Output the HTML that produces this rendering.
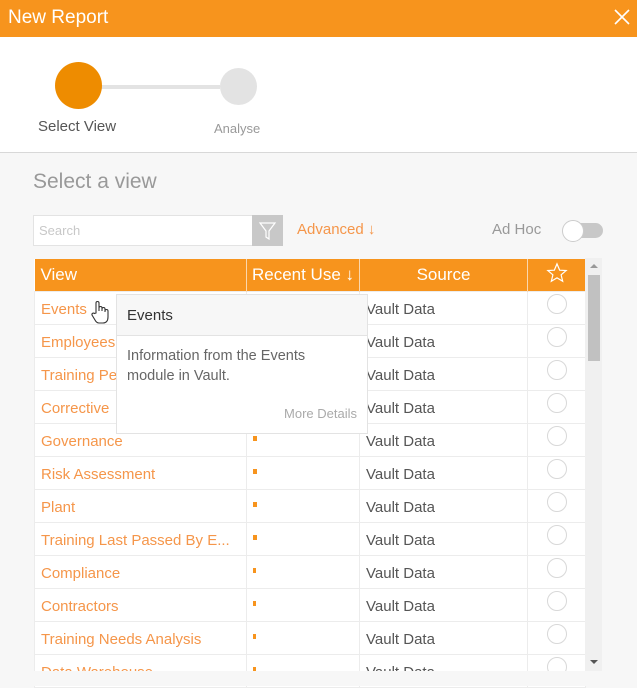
<!DOCTYPE html>
<html><head><style>
*{margin:0;padding:0;box-sizing:border-box}
body{width:637px;height:686px;overflow:hidden;background:#f7f7f7;font-family:"Liberation Sans",sans-serif;position:relative}
.hdr{position:absolute;left:0;top:0;width:637px;height:37px;background:#f7941d;color:#fff;font-size:19px;padding:7px 0 0 8px}
.x{position:absolute;right:6px;top:8px}
.step{position:absolute;left:0;top:37px;width:637px;height:116px;background:#fff;border-bottom:1px solid #d8d8d8}
.abs{position:absolute}
table{border-collapse:collapse;position:absolute;left:34px;top:259px;width:551px;background:#fff;table-layout:fixed}
th{background:#f7941d;color:#fff;font-weight:normal;font-size:17px;height:32px;border-right:1px solid #fbd7ad;text-align:center;padding-top:1px}
td{height:33px;border:1px solid #ececec;font-size:15px;padding:3px 0 0 6px;white-space:nowrap;overflow:hidden}
td.v{color:#f5964a}
td.s{color:#555}
.c{display:block;width:20px;height:20px;border:1px solid #d8d8d8;border-radius:50%;margin:0 auto;position:relative;top:-5px;left:-3px}
.b{display:inline-block;width:4px;background:#f7941d;vertical-align:middle;position:relative;top:-3px}
</style></head><body>
<div class="hdr">New Report<svg class="x" width="18" height="18" viewBox="0 0 18 18"><path d="M2 2L16 16M16 2L2 16" stroke="#fff" stroke-width="1.6"/></svg></div>
<div class="step">
<div class="abs" style="left:78px;top:48px;width:142px;height:4px;background:#e3e3e3"></div>
<div class="abs" style="left:55px;top:25px;width:47px;height:47px;border-radius:50%;background:#ee8c00"></div>
<div class="abs" style="left:220px;top:31px;width:37px;height:37px;border-radius:50%;background:#e3e3e3"></div>
<div class="abs" style="left:38px;top:81px;font-size:15px;color:#555">Select View</div>
<div class="abs" style="left:214px;top:84px;font-size:13px;color:#999">Analyse</div>
</div>
<div class="abs" style="left:33px;top:170px;font-size:21px;color:#999">Select a view</div>
<div class="abs" style="left:33px;top:215px;width:220px;height:31px;background:#fff;border:1px solid #e3e3e3;font-size:13px;color:#c8c8c8;padding:7px 0 0 5px">Search</div>
<div class="abs" style="left:252px;top:215px;width:31px;height:31px;background:#c8c8c8"><svg width="31" height="31" viewBox="0 0 31 31"><path d="M8 8H23L17 16V24L14 22V16Z" fill="none" stroke="#fff" stroke-width="1.2"/></svg></div>
<div class="abs" style="left:297px;top:221px;font-size:15px;color:#f5964a">Advanced ↓</div>
<div class="abs" style="left:492px;top:221px;font-size:15px;color:#999">Ad Hoc</div>
<div class="abs" style="left:565px;top:223px;width:38px;height:15px;border-radius:8px;background:#c8c8c8"></div>
<div class="abs" style="left:562px;top:220px;width:22px;height:22px;border-radius:50%;background:#fff;border:1px solid #ccc"></div>
<table>
<colgroup><col style="width:212px"><col style="width:113px"><col style="width:168px"><col style="width:58px"></colgroup>
<tr><th style="text-align:left;padding-left:6px">View</th><th>Recent Use ↓</th><th>Source</th><th><svg width="22" height="22" viewBox="0 0 24 24"><path d="M12 2L14.9 8.9 22 9.3 16.5 14 18.2 21 12 17.3 5.8 21 7.5 14 2 9.3 9.1 8.9Z" fill="none" stroke="#fff" stroke-width="1.3"/></svg></th></tr>
<tr><td class="v">Events</td><td></td><td class="s">Vault Data</td><td><span class="c"></span></td></tr>
<tr><td class="v">Employees</td><td></td><td class="s">Vault Data</td><td><span class="c"></span></td></tr>
<tr><td class="v">Training Pe</td><td></td><td class="s">Vault Data</td><td><span class="c"></span></td></tr>
<tr><td class="v">Corrective</td><td></td><td class="s">Vault Data</td><td><span class="c"></span></td></tr>
<tr><td class="v">Governance</td><td><span class="b" style="height:5px"></span></td><td class="s">Vault Data</td><td><span class="c"></span></td></tr>
<tr><td class="v">Risk Assessment</td><td><span class="b" style="height:5px"></span></td><td class="s">Vault Data</td><td><span class="c"></span></td></tr>
<tr><td class="v">Plant</td><td><span class="b" style="height:5px"></span></td><td class="s">Vault Data</td><td><span class="c"></span></td></tr>
<tr><td class="v">Training Last Passed By E...</td><td><span class="b" style="height:5px"></span></td><td class="s">Vault Data</td><td><span class="c"></span></td></tr>
<tr><td class="v">Compliance</td><td><span class="b" style="height:5px;width:3px"></span></td><td class="s">Vault Data</td><td><span class="c"></span></td></tr>
<tr><td class="v">Contractors</td><td><span class="b" style="height:5px;width:3px"></span></td><td class="s">Vault Data</td><td><span class="c"></span></td></tr>
<tr><td class="v">Training Needs Analysis</td><td><span class="b" style="height:5px;width:3px"></span></td><td class="s">Vault Data</td><td><span class="c"></span></td></tr>
<tr><td class="v">Data Warehouse</td><td><span class="b" style="height:5px;width:3px"></span></td><td class="s">Vault Data</td><td><span class="c"></span></td></tr>
</table>
<div class="abs" style="left:0;top:671px;width:637px;height:15px;background:#f7f7f7"></div>
<div class="abs" style="left:585px;top:258px;width:17px;height:413px;background:#f0f0f0"></div>
<div class="abs" style="left:588px;top:275px;width:12px;height:86px;background:#c1c1c1"></div>
<div class="abs" style="left:590px;top:264px;border:4px solid transparent;border-bottom-color:#999;border-top:0"></div>
<div class="abs" style="left:590px;top:660px;border:4px solid transparent;border-top-color:#555;border-bottom:0"></div>
<div class="abs" style="left:116px;top:294px;width:252px;height:140px;background:#fff;border:1px solid #e3e3e3">
<div style="height:41px;background:#f7f7f7;border-bottom:1px solid #e3e3e3;font-size:15px;color:#333;padding:12px 0 0 10px">Events</div>
<div style="font-size:14.5px;color:#666;padding:10px 30px 0 10px;line-height:20px">Information from the Events module in Vault.</div>
<div style="position:absolute;right:10px;bottom:12px;font-size:13px;color:#aaa">More Details</div>
</div>
<svg class="abs" style="left:90px;top:300px" width="20" height="26" viewBox="0 0 20 26"><path d="M6 13V3a1.5 1.5 0 013 0v8V8a1.5 1.5 0 013 0v3-2a1.5 1.5 0 013 0v3-1a1.5 1.5 0 013 0v6c0 4-2 6-5 6H9c-2 0-3-1-4-3L2 15a1.5 1.5 0 012.5-1.5Z" fill="#fff" stroke="#333" stroke-width="1.1"/></svg>
</body></html>
